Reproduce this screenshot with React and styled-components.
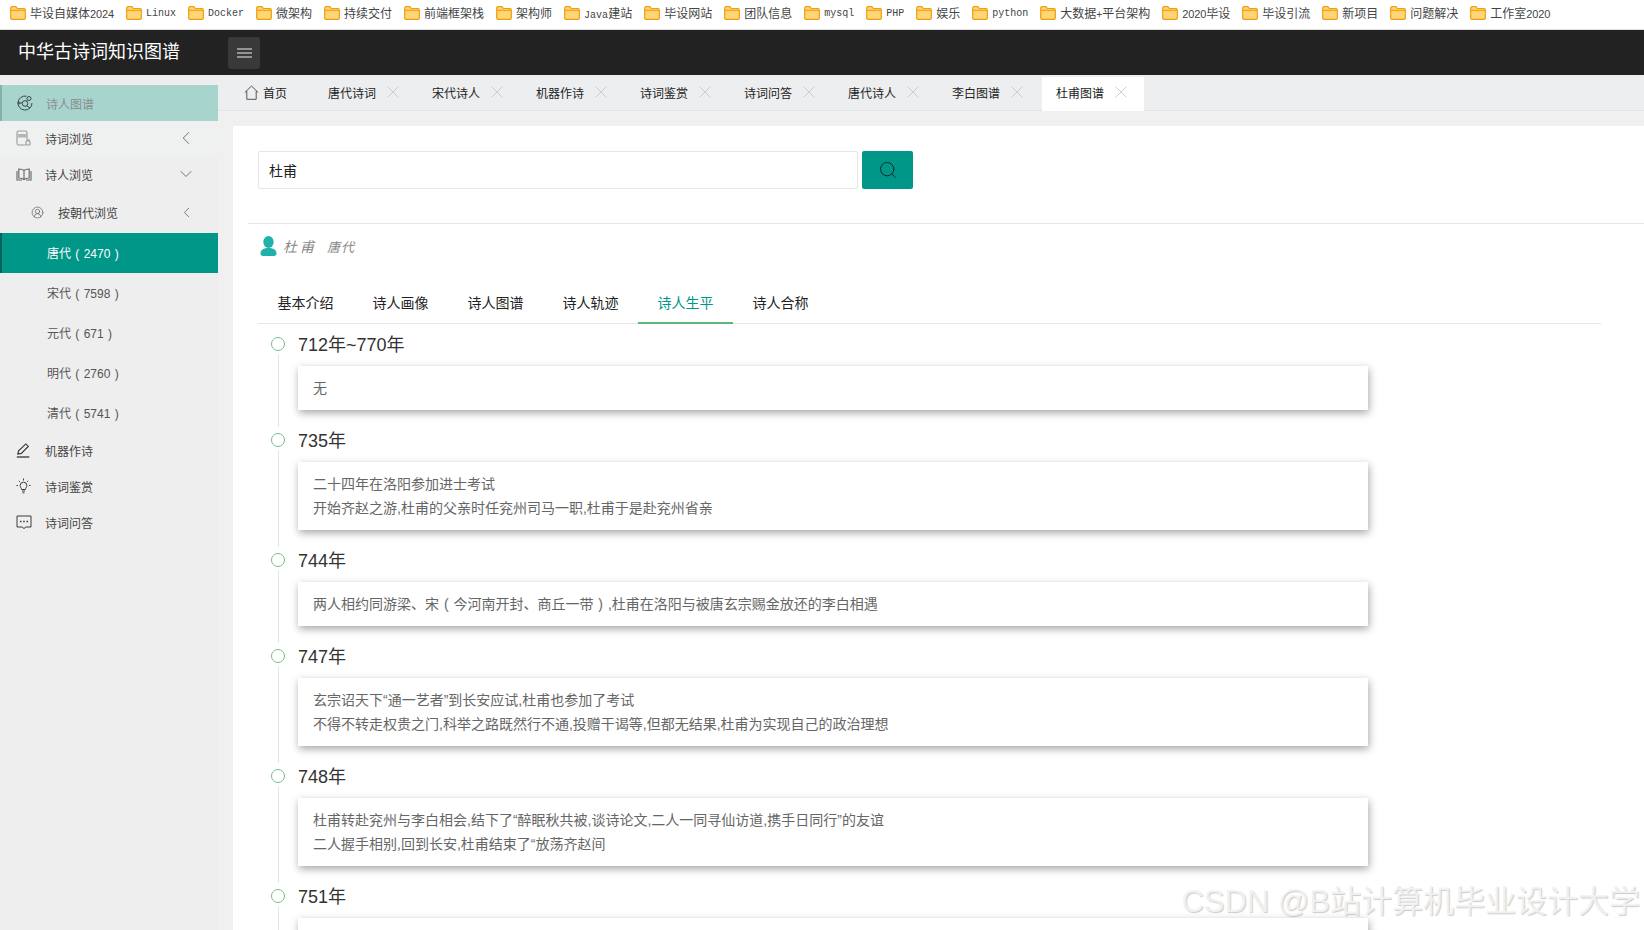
import { createGlobalStyle, styled } from 'styled-components';
import { ChevronLeft, ChevronDown, Search, X, CircleUserRound } from 'lucide-react';

const GlobalStyle = createGlobalStyle`
  html, body {
    margin: 0;
    height: 100%;
    overflow: hidden;
    background: #f0f0f0;
    font-family: "Liberation Sans", "Noto Sans CJK SC", sans-serif;
  }
  * { box-sizing: border-box; }
`

const Page = styled.div`
  position: relative;
  width: 1644px;
  height: 930px;
  overflow: hidden;
  display: flex;
  flex-direction: column;
`

const BookmarkBar = styled.div`
  height: 30px;
  flex: none;
  display: flex;
  align-items: center;
  padding: 0 0 3px 10px;
  background: #fff;
  border-bottom: 1px solid #e0e0e0;
`

const Bookmark = styled.div`
  display: flex;
  align-items: center;
  gap: 4px;
  margin-right: 12px;
  font-size: 12px;
  color: #444;
  white-space: nowrap;
`

const BookmarkText = styled.span`
  margin-bottom: 2px;
`

const Mono = styled.span`
  font-family: "Liberation Mono", monospace;
  font-size: 10px;
`

const Digits = styled.span`
  font-size: 11px;
  letter-spacing: -0.12px;
`

const Header = styled.header`
  height: 45px;
  flex: none;
  display: flex;
  align-items: center;
  background: #222;
`

const Logo = styled.div`
  width: 228px;
  padding: 0 0 6px 18px;
  font-size: 18px;
  color: #fff;
`

const MenuButton = styled.button`
  width: 32px;
  height: 32px;
  padding: 0;
  border: 0;
  border-radius: 3px;
  display: flex;
  align-items: center;
  justify-content: center;
  background: #393939;
  color: #eee;
`

const Body = styled.div`
  flex: 1;
  display: flex;
  min-height: 0;
`

const Sidebar = styled.aside`
  width: 218px;
  flex: none;
  padding-top: 10px;
  background: #eee;
`

const NavRow = styled.div`
  height: ${p => p.$h || 36}px;
  display: flex;
  align-items: center;
  padding: ${p => (p.$active ? '0 21px 0 15px' : `0 21px 2px ${p.$indent || 16}px`)};
  font-size: 12px;
  color: ${p => (p.$active ? '#8a8f8d' : '#444')};
  background: ${p => (p.$active ? '#a8d4ce' : p.$soft ? '#eff0f0' : 'transparent')};
  border-left: ${p => (p.$active ? '2px solid #7fb3ac' : '0')};
`

const NavIcon = styled.span`
  width: ${p => p.$w || 29}px;
  flex: none;
  display: flex;
  align-items: center;
  color: #555;
`

const NavArrow = styled.span`
  width: 22px;
  margin-left: auto;
  display: flex;
  justify-content: center;
  color: #666;
`

const SubItem = styled.div`
  height: 40px;
  display: flex;
  align-items: center;
  padding: 0 0 2px ${p => (p.$active ? 45 : 47)}px;
  font-size: 12px;
  word-spacing: 1px;
  color: ${p => (p.$active ? '#fff' : '#555')};
  background: ${p => (p.$active ? '#009688' : 'transparent')};
  border-left: ${p => (p.$active ? '2px solid #00625a' : '0')};
`

const Main = styled.main`
  flex: 1;
  min-width: 0;
  display: flex;
  flex-direction: column;
`

const TabStrip = styled.div`
  height: 36px;
  flex: none;
  display: flex;
  align-items: flex-end;
  gap: 2px;
  padding-left: 12px;
  background: #edeef0;
  border-bottom: 1px solid #e2e3e5;
`

const Tab = styled.div`
  height: 34px;
  margin-bottom: -1px;
  width: ${p => (p.$home ? 82 : 102)}px;
  display: flex;
  align-items: center;
  padding: 0 0 4px 14px;
  font-size: 12px;
  color: #222;
  background: ${p => (p.$active ? '#fff' : 'transparent')};

  svg.close {
    margin-left: 7px;
    color: #c4c4c4;
  }
  svg.home {
    margin-right: 4px;
    color: #555;
  }
`

const Panel = styled.div`
  flex: 1;
  min-height: 0;
  margin: 15px 0 0 15px;
  padding: 25px 0 0 15px;
  background: #fff;
  overflow: hidden;
`

const SearchRow = styled.div`
  display: flex;
  gap: 4px;
  padding-left: 10px;
`

const SearchBox = styled.div`
  width: 600px;
  height: 38px;
  display: flex;
  align-items: center;
  padding-left: 10px;
  font-size: 14px;
  color: #222;
  border: 1px solid #e6e6e6;
  border-radius: 2px;
`

const SearchButton = styled.button`
  width: 51px;
  height: 38px;
  padding: 0;
  border: 0;
  border-radius: 2px;
  display: flex;
  align-items: center;
  justify-content: center;
  background: #009688;
  color: #0d2b28;
`

const Divider = styled.div`
  height: 1px;
  margin-top: 34px;
  background: #e6e6e6;
`

const PoetRow = styled.div`
  display: flex;
  align-items: center;
  height: 46px;
  padding: 0 0 2px 12px;
  color: #888;
  font-style: italic;
`

const PoetIcon = styled.svg`
  margin-right: 6px;
`

const PoetName = styled.span`
  font-size: 14px;
  letter-spacing: 3px;
  margin-right: 10px;
`

const PoetDynasty = styled.span`
  font-size: 13px;
  letter-spacing: 1px;
`

const TabsBar = styled.div`
  display: flex;
  width: 1343px;
  height: 41px;
  margin: 13px 0 0 10px;
  border-bottom: 1px solid #e6e6e6;
`

const TabItem = styled.div`
  width: 95px;
  height: 41px;
  flex: none;
  text-align: center;
  line-height: 41px;
  font-size: 14px;
  color: ${p => (p.$active ? '#009688' : '#222')};
  border-bottom: ${p => (p.$active ? '2px solid #5fb878' : '0')};
`

const Timeline = styled.div`
  margin: 7px 0 0 10px;
  width: 1110px;
`

const Item = styled.div`
  display: flex;
`

const Axis = styled.div`
  width: 40px;
  flex: none;
  display: flex;
  flex-direction: column;
  align-items: center;
  padding-top: 6px;
`

const Dot = styled.span`
  width: 14px;
  height: 14px;
  flex: none;
  border: 1.5px solid #74bf8c;
  border-radius: 50%;
`

const AxisLine = styled.span`
  flex: 1;
  width: 1px;
  margin-top: 3px;
  background: #e2e4e8;
`

const ItemBody = styled.div`
  flex: 1;
  min-width: 0;
  padding-bottom: 17px;
`

const Year = styled.div`
  height: 26px;
  line-height: 28px;
  font-size: 18px;
  color: #333;
`

const Card = styled.div`
  margin-top: 9px;
  width: 1070px;
  min-height: 44px;
  padding: 10px 15px;
  background: #fff;
  font-size: 14px;
  line-height: 24px;
  word-spacing: 1px;
  color: #666;
  box-shadow: 1px 3px 8px rgba(0, 0, 0, 0.35);
`

const Watermark = styled.div`
  position: absolute;
  right: 4px;
  bottom: 9px;
  font-size: 31px;
  line-height: 38px;
  white-space: nowrap;
  color: rgba(244, 244, 244, 0.9);
  text-shadow: 1px 1px 1px rgba(0, 0, 0, 0.2);
`

const bookmarks = ['毕设自媒体2024', 'Linux', 'Docker', '微架构', '持续交付', '前端框架栈', '架构师', 'Java建站', '毕设网站', '团队信息', 'mysql', 'PHP', '娱乐', 'python', '大数据+平台架构', '2020毕设', '毕设引流', '新项目', '问题解决', '工作室2020']

const tabs = ['唐代诗词', '宋代诗人', '机器作诗', '诗词鉴赏', '诗词问答', '唐代诗人', '李白图谱', '杜甫图谱']

const poetTabs = ['基本介绍', '诗人画像', '诗人图谱', '诗人轨迹', '诗人生平', '诗人合称']

const dynasties = ['唐代 ( 2470 )', '宋代 ( 7598 )', '元代 ( 671 )', '明代 ( 2760 )', '清代 ( 5741 )']

const events = [
  { year: '712年~770年', lines: ['无'] },
  { year: '735年', lines: ['二十四年在洛阳参加进士考试', '开始齐赵之游,杜甫的父亲时任兖州司马一职,杜甫于是赴兖州省亲'] },
  { year: '744年', lines: ['两人相约同游梁、宋 ( 今河南开封、商丘一带 ) ,杜甫在洛阳与被唐玄宗赐金放还的李白相遇'] },
  { year: '747年', lines: ['玄宗诏天下“通一艺者”到长安应试,杜甫也参加了考试', '不得不转走权贵之门,科举之路既然行不通,投赠干谒等,但都无结果,杜甫为实现自己的政治理想'] },
  { year: '748年', lines: ['杜甫转赴兖州与李白相会,结下了“醉眠秋共被,谈诗论文,二人一同寻仙访道,携手日同行”的友谊', '二人握手相别,回到长安,杜甫结束了“放荡齐赵间'] },
  { year: '751年', lines: [] },
]

function FolderIcon() {
  return (
    <svg width="16" height="14" viewBox="0 0 16 14">
      <path d="M.7 2C.7 1.200 1.200.7 2 .7h3.800l1.600 1.800H14c.8 0 1.300.5 1.300 1.300V12c0 .8-.5 1.300-1.300 1.300H2c-.8 0-1.300-.5-1.300-1.300z" fill="#ffd677" stroke="#f29d0a" strokeWidth="1.200" />
      <path d="M1 4.300h14" stroke="#f29d0a" strokeWidth="1.100" />
    </svg>
  )
}

function BookmarkLabel({ text }) {
  return text.split(/([A-Za-z+]+|\d+)/).map((part, i) => {
    if (/^\d+$/.test(part)) return <Digits key={i}>{part}</Digits>
    if (/^[A-Za-z+]+$/.test(part)) return <Mono key={i}>{part}</Mono>
    return part
  })
}

function MenuLines() {
  return (
    <svg width="15" height="10" viewBox="0 0 15 10" stroke="currentColor" strokeWidth="1.200">
      <path d="M0 1h15M0 5h15M0 9h15" />
    </svg>
  )
}

function HomeIcon() {
  return (
    <svg className="home" width="15" height="15" viewBox="0 0 15 15" fill="none" stroke="currentColor" strokeWidth="1">
      <path d="M.8 7.500 7.500 1l6.700 6.500M2.800 6v8.300h9.400V6" />
    </svg>
  )
}

function GraphIcon() {
  return (
    <svg width="16" height="16" viewBox="0 0 16 16" fill="none" stroke="#3d4a48" strokeWidth="1">
      <path d="M9.500 1.200A7 7 0 1 0 15 8" />
      <circle cx="12" cy="3.500" r="2" />
      <circle cx="8" cy="8.500" r="2.800" />
      <circle cx="1.800" cy="8" r="1" />
      <path d="M2.800 8h2.400M10.500 5 9.300 6.200M10 11l3 2" />
    </svg>
  )
}

function DocIcon() {
  return (
    <svg width="15" height="16" viewBox="0 0 15 16" fill="none" stroke="#9a9a9a" strokeWidth="1.100">
      <path d="M9.500 15H2.500A1.500 1.500 0 0 1 1 13.500V2.500A1.500 1.500 0 0 1 2.500 1h7A1.500 1.500 0 0 1 11 2.500V9" />
      <path d="M2 4h8.500v3.500H2z" fill="#b5b5b5" stroke="none" />
      <rect x="10" y="11" width="4" height="4" rx="1" />
      <path d="M11 11V9.800h2V11" />
    </svg>
  )
}

function BookIcon() {
  return (
    <svg width="16" height="13" viewBox="0 0 16 13" fill="none" stroke="#666" strokeWidth="1.100">
      <path d="M8 2.500C6.800 1.300 5 1 2.800 1v9C5 10 6.800 10.300 8 11.500c1.200-1.200 3-1.500 5.200-1.500V1C11 1 9.200 1.300 8 2.500zM8 2.500v9" />
      <path d="M1 3v9h5M15 3v9h-5" />
    </svg>
  )
}

function PenIcon() {
  return (
    <svg width="15" height="15" viewBox="0 0 15 15" fill="none" stroke="#333" strokeWidth="1.100">
      <path d="M1.800 11 2.600 7.800 9.800 .9l2.500 2.500-7 7z" />
      <path d="M.8 14h12.500" strokeWidth="1.300" />
    </svg>
  )
}

function BulbIcon() {
  return (
    <svg width="15" height="16" viewBox="0 0 15 16" fill="none" stroke="#3c3c3c" strokeWidth="1">
      <path d="M5.500 11.500C5.500 10 4.200 9.500 4.200 7.500a3.300 3.300 0 0 1 6.600 0c0 2-1.300 2.500-1.300 4z" />
      <path d="M6 13h3M6.500 14.800h2M7.500 .5V2.500M2 7.500H.5M14.500 7.500H13M2.800 2.800l1.100 1.100M12.200 2.800l-1.100 1.100" />
    </svg>
  )
}

function ChatIcon() {
  return (
    <svg width="16" height="15" viewBox="0 0 16 15" fill="none" stroke="#3c3c3c" strokeWidth="1">
      <path d="M1 1h14v11H9.500L8 13.800 6.500 12H1z" />
      <path d="M4 6.500h1.500M7.200 6.500h1.500M10.500 6.500H12" strokeWidth="1.300" />
    </svg>
  )
}

export default function App() {
  return (
    <Page>
      <GlobalStyle />
      <BookmarkBar>
        {bookmarks.map(name => (
          <Bookmark key={name}>
            <FolderIcon />
            <BookmarkText><BookmarkLabel text={name} /></BookmarkText>
          </Bookmark>
        ))}
      </BookmarkBar>
      <Header>
        <Logo>中华古诗词知识图谱</Logo>
        <MenuButton><MenuLines /></MenuButton>
      </Header>
      <Body>
        <Sidebar>
          <NavRow $active><NavIcon><GraphIcon /></NavIcon>诗人图谱</NavRow>
          <NavRow $soft><NavIcon><DocIcon /></NavIcon>诗词浏览<NavArrow><ChevronLeft size={22} strokeWidth={1} /></NavArrow></NavRow>
          <NavRow><NavIcon><BookIcon /></NavIcon>诗人浏览<NavArrow><ChevronDown size={20} strokeWidth={1.100} /></NavArrow></NavRow>
          <NavRow $indent={31} $h={40}><NavIcon $w={27}><CircleUserRound size={13} strokeWidth={1.200} /></NavIcon>按朝代浏览<NavArrow><ChevronLeft size={17} strokeWidth={1.200} /></NavArrow></NavRow>
          {dynasties.map((d, i) => <SubItem key={d} $active={i === 0}>{d}</SubItem>)}
          <NavRow><NavIcon><PenIcon /></NavIcon>机器作诗</NavRow>
          <NavRow><NavIcon><BulbIcon /></NavIcon>诗词鉴赏</NavRow>
          <NavRow><NavIcon><ChatIcon /></NavIcon>诗词问答</NavRow>
        </Sidebar>
        <Main>
          <TabStrip>
            <Tab $home><HomeIcon />首页</Tab>
            {tabs.map((t, i) => (
              <Tab key={t} $active={i === tabs.length - 1}>{t}<X className="close" size={20} strokeWidth={1} /></Tab>
            ))}
          </TabStrip>
          <Panel>
            <SearchRow>
              <SearchBox>杜甫</SearchBox>
              <SearchButton><Search size={20} strokeWidth={1.200} /></SearchButton>
            </SearchRow>
            <Divider />
            <PoetRow>
              <PoetIcon width="17" height="20" viewBox="0 0 17 20">
                <ellipse cx="8.500" cy="6" rx="5.200" ry="6" fill="#20b2aa" />
                <path d="M.5 17.500c0-4 3.500-5.500 8-5.500s8 1.500 8 5.500c0 1.500-1 2.500-2.500 2.500H3c-1.500 0-2.500-1-2.500-2.500z" fill="#20b2aa" />
              </PoetIcon>
              <PoetName>杜甫</PoetName>
              <PoetDynasty>唐代</PoetDynasty>
            </PoetRow>
            <TabsBar>
              {poetTabs.map(t => <TabItem key={t} $active={t === '诗人生平'}>{t}</TabItem>)}
            </TabsBar>
            <Timeline>
              {events.map(ev => (
                <Item key={ev.year}>
                  <Axis><Dot /><AxisLine /></Axis>
                  <ItemBody>
                    <Year>{ev.year}</Year>
                    <Card>{ev.lines.map(line => <div key={line}>{line}</div>)}</Card>
                  </ItemBody>
                </Item>
              ))}
            </Timeline>
          </Panel>
        </Main>
      </Body>
      <Watermark>CSDN @B站计算机毕业设计大学</Watermark>
    </Page>
  )
}
